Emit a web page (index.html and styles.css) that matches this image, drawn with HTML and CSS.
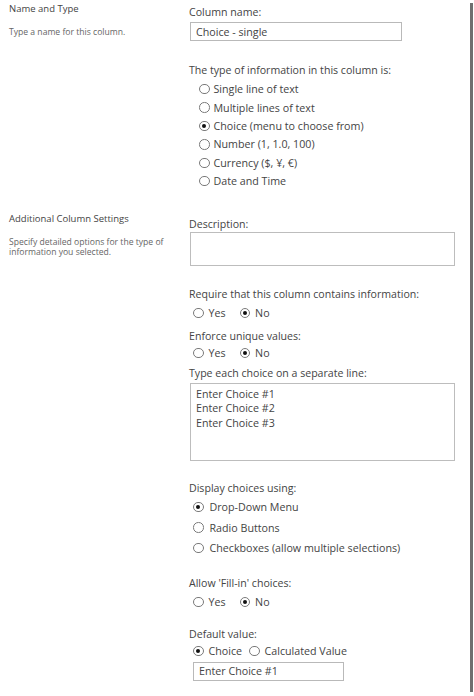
FILE: index.html
```html
<!DOCTYPE html>
<html lang="en">
<head>
<meta charset="utf-8">
<title>Column settings</title>
<link rel="stylesheet" href="styles.css">
</head>
<body>
<div class="frame">
  <div class="section s1">
    <div class="info">
      <div class="title">Name and Type</div>
      <div class="desc">Type a name for this column.</div>
    </div>
    <div class="fields">
      <div class="label">Column name:</div>
      <input class="textbox tb-name" type="text" value="Choice - single">
      <div class="label l-type">The type of information in this column is:</div>
      <ul class="radio-list type-list">
        <li class="radio-item"><span class="radio"></span>Single line of text</li>
        <li class="radio-item"><span class="radio"></span>Multiple lines of text</li>
        <li class="radio-item"><span class="radio checked"></span>Choice (menu to choose from)</li>
        <li class="radio-item"><span class="radio"></span>Number (1, 1.0, 100)</li>
        <li class="radio-item"><span class="radio"></span>Currency ($, ¥, €)</li>
        <li class="radio-item"><span class="radio"></span>Date and Time</li>
      </ul>
    </div>
  </div>
  <div class="section s2">
    <div class="info">
      <div class="title">Additional Column Settings</div>
      <div class="desc">Specify detailed options for the type of information you selected.</div>
    </div>
    <div class="fields">
      <div class="label">Description:</div>
      <div class="textarea ta-desc"></div>
      <div class="label l-require">Require that this column contains information:</div>
      <div class="radio-row rr-require">
        <span class="opt opt-yes"><span class="radio"></span>Yes</span>
        <span class="opt"><span class="radio checked"></span>No</span>
      </div>
      <div class="label l-unique">Enforce unique values:</div>
      <div class="radio-row rr-unique">
        <span class="opt opt-yes"><span class="radio"></span>Yes</span>
        <span class="opt"><span class="radio checked"></span>No</span>
      </div>
      <div class="label l-choices">Type each choice on a separate line:</div>
      <div class="textarea ta-choices">Enter Choice #1<br>Enter Choice #2<br>Enter Choice #3</div>
      <div class="label l-display">Display choices using:</div>
      <ul class="radio-list display-list">
        <li class="radio-item"><span class="radio checked"></span>Drop-Down Menu</li>
        <li class="radio-item"><span class="radio"></span>Radio Buttons</li>
        <li class="radio-item"><span class="radio"></span>Checkboxes (allow multiple selections)</li>
      </ul>
      <div class="label l-fillin">Allow 'Fill-in' choices:</div>
      <div class="radio-row rr-fillin">
        <span class="opt opt-yes"><span class="radio"></span>Yes</span>
        <span class="opt"><span class="radio checked"></span>No</span>
      </div>
      <div class="label l-default">Default value:</div>
      <div class="radio-row rr-default">
        <span class="opt opt-choice"><span class="radio checked"></span>Choice</span>
        <span class="opt"><span class="radio"></span>Calculated Value</span>
      </div>
      <input class="textbox tb-default" type="text" value="Enter Choice #1">
    </div>
  </div>
</div>
</body>
</html>
```
FILE: styles.css
```css
html, body {
  margin: 0;
  padding: 0;
  background: #ffffff;
}

body {
  font-family: "Open Sans", "Noto Sans", sans-serif;
  color: #444444;
}

.frame {
  width: 470px;
  height: 692px;
  background: #ffffff;
  box-shadow: 3px 3px 0 #6f6f6f;
  overflow: hidden;
}

.section {
  display: grid;
  grid-template-columns: 189px 1fr;
}

.section + .section {
  margin-top: 20px;
}

.info {
  padding-left: 9px;
}

.s1 .info { padding-top: 2px; }
.s1 .fields { padding-top: 4px; }
.s2 .info { padding-top: 1.6px; }
.s2 .fields { padding-top: 5.6px; }

.title {
  font-size: 9.5px;
  line-height: 14px;
  color: #444444;
}

.desc {
  font-size: 8.6px;
  line-height: 10.5px;
  color: #666666;
  margin-top: 11px;
  width: 175px;
}

.label {
  font-size: 10.6px;
  line-height: 16px;
  white-space: nowrap;
}

.textbox {
  display: block;
  box-sizing: border-box;
  height: 19px;
  margin: 2px 0 0 1px;
  padding: 0 0 0 5px;
  border: 1px solid #b9b9b9;
  font-family: inherit;
  font-size: 10.7px;
  color: #444444;
  background: #ffffff;
  outline: none;
}

.tb-name { width: 212px; }
.tb-default { width: 151px; margin-left: 4px; }

.textarea {
  box-sizing: border-box;
  width: 265px;
  margin-left: 1px;
  border: 1px solid #bdbdbd;
  font-size: 10.7px;
  line-height: 14.5px;
  padding: 3px 0 0 5px;
}

.ta-desc { height: 34px; }
.ta-choices { height: 78px; margin-top: 2px; }

.l-type { margin-top: 21px; }
.l-require { margin-top: 20px; }
.l-unique { margin-top: 6px; }
.l-choices { margin-top: 3px; }
.l-display { margin-top: 19px; }
.l-fillin { margin-top: 16.5px; }
.l-default { margin-top: 15px; }

.radio-list {
  list-style: none;
  margin: 0;
  padding: 0;
}

.radio-item {
  display: flex;
  align-items: center;
  font-size: 10.7px;
  white-space: nowrap;
}

.type-list {
  margin-top: 2px;
  padding-left: 10px;
}

.type-list .radio-item {
  height: 18.4px;
}

.type-list .radio {
  margin-right: 4px;
}

.display-list {
  margin-top: 1px;
  padding-left: 4px;
}

.display-list .radio-item {
  height: 20.5px;
}

.display-list .radio {
  margin-right: 6px;
}

.radio-row {
  display: flex;
  align-items: center;
  height: 18px;
  padding-left: 4px;
  font-size: 10.7px;
  white-space: nowrap;
}

.rr-require { margin-top: 2px; }
.rr-fillin { margin-top: 2px; }

.opt {
  display: flex;
  align-items: center;
}

.opt .radio {
  margin-right: 5px;
}

.opt-yes { margin-right: 14px; }
.opt-choice { margin-right: 7px; }

.radio {
  box-sizing: border-box;
  display: inline-block;
  flex: none;
  width: 10.5px;
  height: 10.5px;
  border: 1px solid #7a7a7a;
  border-radius: 50%;
  background: #ffffff;
  position: relative;
}

.radio.checked::after {
  content: "";
  position: absolute;
  left: 2.25px;
  top: 2.25px;
  width: 4px;
  height: 4px;
  border-radius: 50%;
  background: #111111;
}
```
